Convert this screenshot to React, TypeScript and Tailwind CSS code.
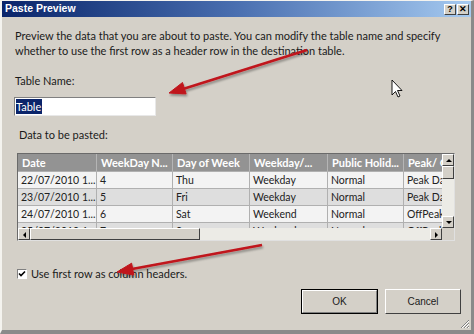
import React from "react";

const rows = [
  ["22/07/2010 1...", "4", "Thu", "Weekday", "Normal", "Peak Day"],
  ["23/07/2010 1...", "5", "Fri", "Weekday", "Normal", "Peak Day"],
  ["24/07/2010 1...", "6", "Sat", "Weekend", "Normal", "OffPeak"],
  ["25/07/2010 1...", "7", "Sun", "Weekend", "Normal", "OffPeak"],
];

const headers = ["Date", "WeekDay N...", "Day of Week", "Weekday/...", "Public Holid...", "Peak/ Off"];
const cols = "grid grid-cols-[79px_76px_77px_78px_76px_60px]";

function ArrowBtn({ dir }: { dir: "up" | "down" | "left" | "right" }) {
  const pts = {
    up: "2,6 5,3 8,6",
    down: "2,3 5,6 8,3",
    left: "6,2 3,5 6,8",
    right: "3,2 6,5 3,8",
  }[dir];
  return (
    <div className="flex h-[12px] w-[12px] shrink-0 items-center justify-center border border-t-white border-l-white border-r-[#404040] border-b-[#404040] bg-[#d4d0c8]">
      <svg width="9" height="9" viewBox="0 0 9 9">
        <polygon points={pts} fill="#000" />
      </svg>
    </div>
  );
}

export default function App() {
  return (
    <div
      className="relative h-[334px] w-[474px] overflow-hidden border-t border-l-2 border-r-[3px] border-b-[4px] border-t-[#f4f3ef] border-l-[#f4f3ef] border-r-[#8a8a8a] border-b-[#8a8a8a] bg-[#d4d0c8] text-[#1a1a1a]"
      style={{ fontFamily: "Lato, 'Open Sans', sans-serif" }}
    >
      {/* title bar */}
      <div className="flex h-[16px] items-center justify-between bg-gradient-to-r from-[#0a246a] via-[#4a6fb0] to-[#a6caf0] pl-[3px] pr-[2px]">
        <span className="text-[10.5px] font-bold text-white" style={{ fontFamily: "'Liberation Sans', sans-serif" }}>
          Paste Preview
        </span>
        <div className="flex gap-[1px]">
          <div className="flex h-[11px] w-[12px] items-center justify-center border border-t-white border-l-white border-r-[#404040] border-b-[#404040] bg-[#d4d0c8] text-[9px] font-bold leading-none text-black" style={{ fontFamily: "'Liberation Sans', sans-serif" }}>
            ?
          </div>
          <div className="flex h-[11px] w-[12px] items-center justify-center border border-t-white border-l-white border-r-[#404040] border-b-[#404040] bg-[#d4d0c8] text-[9px] font-bold leading-none text-black" style={{ fontFamily: "'Liberation Sans', sans-serif" }}>
            ✕
          </div>
        </div>
      </div>

      <div className="flex flex-col pl-[13px] text-[11px] leading-[15px]">
        <p className="mt-[11px]">
          Preview the data that you are about to paste. You can modify the table name and specify
          <br />
          whether to use the first row as a header row in the destination table.
        </p>
        <div className="mt-[15px]">Table Name:</div>
        <div className="ml-[-1px] mt-[9px] flex h-[19px] w-[142px] items-center border border-t-[#808080] border-l-[#808080] border-r-[#e8e8e8] border-b-[#e8e8e8] bg-white pl-[1px]">
          <span className="bg-[#0a246a] pr-[1px] text-white">Table</span>
        </div>
        <div className="ml-[4px] mt-[11px]">Data to be pasted:</div>

        {/* table */}
        <div className="ml-[2px] mt-[11px] flex h-[88px] w-[438px] flex-col border border-t-[#6a6a6a] border-l-[#6a6a6a] border-r-[#e0e0e0] border-b-[#e0e0e0] bg-[#f2f2f2]">
          <div className="flex h-[74px]">
            <div className="flex-1 overflow-hidden">
              <div className={`${cols} h-[17px] bg-[#939393] font-bold text-white`}>
                {headers.map((h) => (
                  <div key={h} className="overflow-hidden whitespace-nowrap border-r border-[#b5b5b5] pl-[4px] leading-[17px]">
                    {h}
                  </div>
                ))}
              </div>
              {rows.map((r, i) => (
                <div key={i} className={`${cols} h-[17px] ${i % 2 === 1 ? "bg-[#dedede]" : "bg-[#f3f3f3]"}`}>
                  {r.map((c, j) => (
                    <div key={j} className="overflow-hidden whitespace-nowrap border-r border-t border-[#b0b0b0] pl-[3px] text-[10.5px] leading-[16px] text-[#222]">
                      {c}
                    </div>
                  ))}
                </div>
              ))}
            </div>
            <div className="flex w-[12px] flex-col bg-[#ecebe6]">
              <ArrowBtn dir="up" />
              <div className="h-[13px] border border-t-white border-l-white border-r-[#404040] border-b-[#404040] bg-[#d4d0c8]" />
              <div className="flex-1" />
              <ArrowBtn dir="down" />
            </div>
          </div>
          <div className="flex h-[12px] bg-[#ecebe6]">
            <ArrowBtn dir="left" />
            <div className="w-[170px] border border-t-white border-l-white border-r-[#404040] border-b-[#404040] bg-[#d4d0c8]" />
            <div className="flex-1" />
            <ArrowBtn dir="right" />
            <div className="w-[12px] bg-[#d4d0c8]" />
          </div>
        </div>

        {/* checkbox */}
        <div className="mt-[25px] flex h-[15px] items-center gap-[4px] pl-[2px]">
          <div className="flex h-[10px] w-[10px] items-center justify-center border border-t-[#808080] border-l-[#808080] border-r-white border-b-white bg-white">
            <svg width="8" height="8" viewBox="0 0 8 8">
              <polyline points="1,3.5 3,5.5 7,1.5" fill="none" stroke="#000" strokeWidth="1.6" />
            </svg>
          </div>
          <span>Use first row as column headers.</span>
        </div>

        {/* buttons */}
        <div className="mt-[8px] flex justify-end gap-[7px] pr-[10px] text-[10px]" style={{ fontFamily: "'Liberation Sans', sans-serif" }}>
          <button className="h-[25px] w-[77px] border border-black bg-[#d4d0c8]">
            <div className="flex h-full w-full items-center justify-center border border-t-white border-l-white border-r-[#808080] border-b-[#808080]">
              OK
            </div>
          </button>
          <button className="flex h-[25px] w-[76px] items-center justify-center border border-t-white border-l-white border-r-[#404040] border-b-[#404040] bg-[#d4d0c8]">
            Cancel
          </button>
        </div>
      </div>

      {/* resize grip */}
      <svg className="absolute bottom-[1px] right-[1px]" width="11" height="11" viewBox="0 0 11 11">
        <path d="M10 2 L2 10 M10 5 L5 10 M10 8 L8 10" stroke="#808080" strokeWidth="1" />
        <path d="M10 3 L3 10 M10 6 L6 10 M10 9 L9 10" stroke="#fff" strokeWidth="1" />
      </svg>

      {/* annotation arrows + cursor */}
      <svg className="pointer-events-none absolute left-[-2px] top-[-1px]" width="474" height="334" viewBox="0 0 474 334">
        <defs>
          <filter id="sh" x="-10%" y="-10%" width="120%" height="140%">
            <feDropShadow dx="1" dy="2" stdDeviation="1.2" floodColor="#000" floodOpacity="0.35" />
          </filter>
        </defs>
        <g filter="url(#sh)" fill="#c0141c" stroke="#c0141c">
          <line x1="307" y1="50" x2="183" y2="89" strokeWidth="2.5" />
          <polygon points="169,93 186.1,93.9 182.5,82.5" strokeWidth="1" />
          <line x1="262" y1="245" x2="132" y2="269" strokeWidth="2.5" />
          <polygon points="117,272 133.8,275 131.6,263.2" strokeWidth="1" />
        </g>
        <path d="M392 80 L392 95 L395.5 91.5 L398 97 L400 96 L397.5 90.5 L402 90.5 Z" fill="#fff" stroke="#000" strokeWidth="0.9" strokeLinejoin="round" />
      </svg>
    </div>
  );
}
